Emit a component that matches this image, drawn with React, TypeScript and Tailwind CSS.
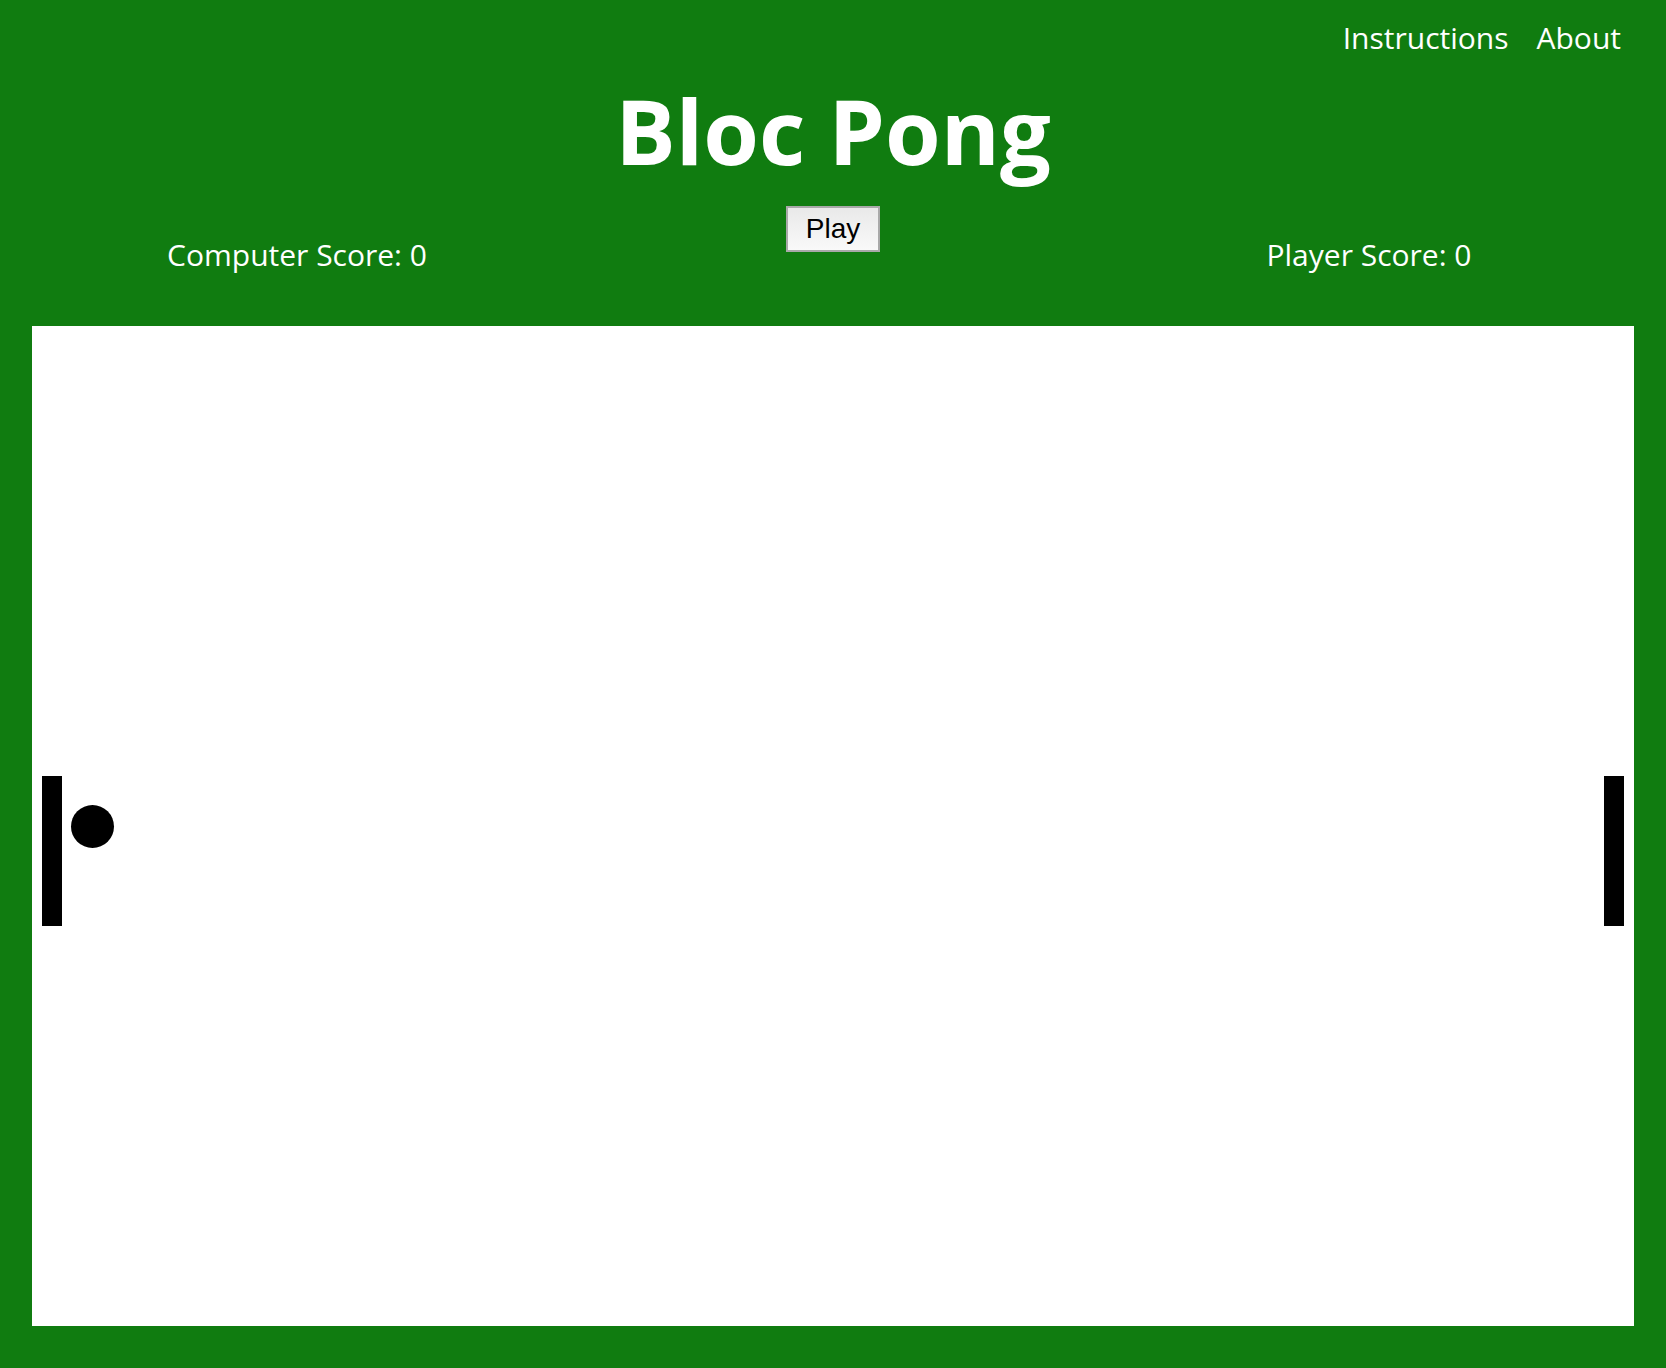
export default function App() {
  return (
    <div className="min-h-screen bg-[#107c10] pb-[42px] font-['Open_Sans',sans-serif] text-white">
      {/* Nav */}
      <nav className="flex justify-end gap-[28px] pr-[45px] pt-[18px] text-[30px] font-medium leading-[40px]">
        <a href="#">Instructions</a>
        <a href="#">About</a>
      </nav>

      <h1 className="mt-[22px] text-center text-[90px] font-bold leading-[100px]">Bloc Pong</h1>

      {/* Scores + play */}
      <div className="grid h-[146px] grid-cols-[594px_1fr_594px] items-start">
        <div className="pt-[55px] text-center text-[30px] font-medium leading-[40px]">Computer Score: 0</div>
        <div className="flex justify-center pt-[26px]">
          <button className="h-[46px] w-[94px] border-2 border-[#a9a9a9] bg-gradient-to-b from-[#e9e9e9] to-[#f9f9f9] font-['Liberation_Sans',sans-serif] text-[28px] leading-none text-black">
            Play
          </button>
        </div>
        <div className="pt-[55px] text-center text-[30px] font-medium leading-[40px]">Player Score: 0</div>
      </div>

      {/* Game board */}
      <div className="relative mx-[32px] h-[1000px] bg-white">
        <div className="absolute left-[10px] top-[450px] h-[150px] w-[20px] bg-black" />
        <div className="absolute left-[39px] top-[479px] h-[43px] w-[43px] rounded-full bg-black" />
        <div className="absolute right-[10px] top-[450px] h-[150px] w-[20px] bg-black" />
      </div>
    </div>
  );
}
